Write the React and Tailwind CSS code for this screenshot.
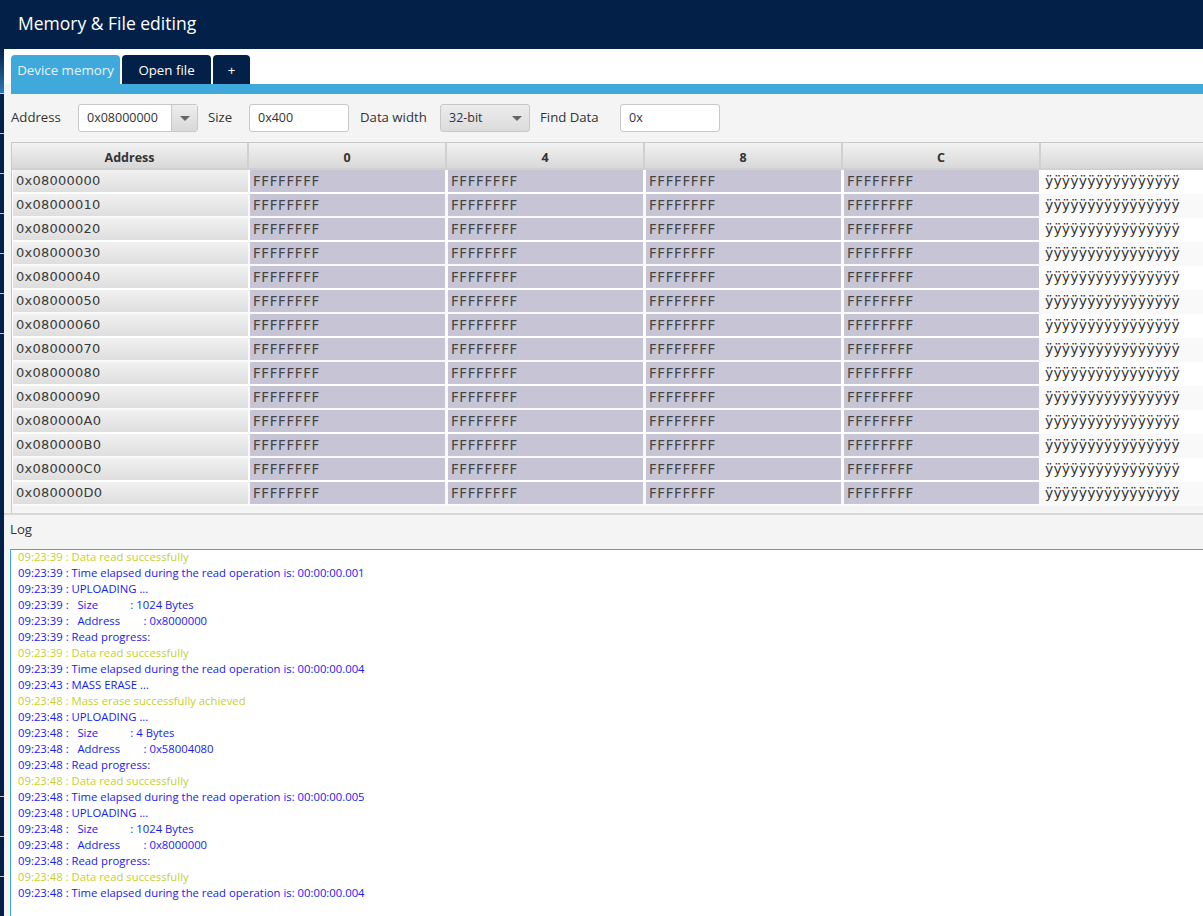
import React from "react";

const hexRows = ["0", "10", "20", "30", "40", "50", "60", "70", "80", "90", "A0", "B0", "C0", "D0"];

const logLines = [
  ["09:23:39 : Data read successfully", "ok"],
  ["09:23:39 : Time elapsed during the read operation is: 00:00:00.001"],
  ["09:23:39 : UPLOADING ..."],
  ["09:23:39 :   Size           : 1024 Bytes"],
  ["09:23:39 :   Address        : 0x8000000"],
  ["09:23:39 : Read progress:"],
  ["09:23:39 : Data read successfully", "ok"],
  ["09:23:39 : Time elapsed during the read operation is: 00:00:00.004"],
  ["09:23:43 : MASS ERASE ..."],
  ["09:23:48 : Mass erase successfully achieved", "ok"],
  ["09:23:48 : UPLOADING ..."],
  ["09:23:48 :   Size           : 4 Bytes"],
  ["09:23:48 :   Address        : 0x58004080"],
  ["09:23:48 : Read progress:"],
  ["09:23:48 : Data read successfully", "ok"],
  ["09:23:48 : Time elapsed during the read operation is: 00:00:00.005"],
  ["09:23:48 : UPLOADING ..."],
  ["09:23:48 :   Size           : 1024 Bytes"],
  ["09:23:48 :   Address        : 0x8000000"],
  ["09:23:48 : Read progress:"],
  ["09:23:48 : Data read successfully", "ok"],
  ["09:23:48 : Time elapsed during the read operation is: 00:00:00.004"],
];

function HeaderCell({ children, className }) {
  return (
    <div className={`flex items-center justify-center h-full pt-[5px] bg-gradient-to-b from-[#f2f2f2] to-[#d8d8d8] font-bold text-[#333] text-[12.5px] ${className}`}>
      {children}
    </div>
  );
}

function DataCell() {
  return (
    <div className="w-[198px] h-[24px] shrink-0 pl-[1px] pr-[2px] pb-[2px]">
      <div className="h-full pl-[3px] bg-[#c6c4d5] text-[#444] text-[13.5px] tracking-[0.6px] leading-[22px] font-['DejaVu_Sans',sans-serif]">
        FFFFFFFF
      </div>
    </div>
  );
}

function Row({ addr, odd }) {
  return (
    <div className={`flex h-[24px] ${odd ? "bg-[#f9f9f9]" : "bg-white"}`}>
      <div className="w-[237px] h-[24px] shrink-0 pb-[2px] pl-[1px] pr-[1px]">
        <div className="h-full pl-[3px] bg-gradient-to-b from-[#f1f1f1] to-[#dedede] text-[#3a3a3a] text-[13px] leading-[22px] tracking-[0.25px] font-['DejaVu_Sans',sans-serif]">
          {addr}
        </div>
      </div>
      <DataCell />
      <DataCell />
      <DataCell />
      <DataCell />
      <div className="flex-1 pl-[4px] text-[#333] text-[14px] leading-[23px] whitespace-nowrap overflow-hidden font-['DejaVu_Sans',sans-serif] tracking-[0.15px]">
        ÿÿÿÿÿÿÿÿÿÿÿÿÿÿÿÿ
      </div>
    </div>
  );
}

function Field({ value, width, className = "" }) {
  return (
    <div className={`flex items-center h-[28px] pl-[8px] bg-white border border-[#c8c8c8] rounded-[3px] text-[#333] text-[12.5px] ${width} ${className}`}>
      {value}
    </div>
  );
}

function Caret() {
  return <div className="w-0 h-0 border-x-[5px] border-x-transparent border-t-[5px] border-t-[#666]" />;
}

function Tick({ className = "mb-[39px]" }) {
  return <div className={`h-[1px] bg-[#c8c8c8] ${className}`} />;
}

export default function App() {
  return (
    <div className="flex flex-col w-[1203px] h-[916px] overflow-hidden bg-[#032148] font-['Open_Sans',sans-serif]">
      <div className="flex items-center h-[49px] shrink-0 pl-[18px] pb-[3px] text-white text-[17.5px]">
        Memory &amp; File editing
      </div>
      <div className="flex flex-1 min-h-0">
        <div className="w-[4px] shrink-0 flex flex-col">
          <div className="h-[44px] bg-gradient-to-b from-[#032148] to-[#2a7ab8]" />
          <Tick />
          <Tick />
          <Tick />
          <Tick />
          <Tick />
          <Tick />
          <Tick className="mb-[462px]" />
          <Tick />
          <Tick />
          <Tick />
        </div>
        <div className="flex-1 min-w-0 flex flex-col bg-[#f4f4f4]">
          <div className="h-[35px] shrink-0 flex items-end gap-[2px] pl-[7px] bg-white">
            <div className="flex items-center justify-center w-[109px] h-[29px] pt-[2px] rounded-t-[4px] bg-[#3fa9db] text-[#e8f4fa] text-[13.3px]">Device memory</div>
            <div className="flex items-center justify-center w-[89px] h-[29px] pt-[2px] rounded-t-[4px] bg-[#032148] text-white text-[13.3px]">Open file</div>
            <div className="flex items-center justify-center w-[37px] h-[29px] pt-[2px] rounded-t-[4px] bg-[#032148] text-white text-[13.3px]">+</div>
          </div>
          <div className="h-[10px] shrink-0 ml-[7px] bg-[#3fa9db]" />
          <div className="h-[48px] shrink-0 flex items-center pl-[7px] text-[#333] text-[13.2px]">
            <span className="w-[67px]">Address</span>
            <div className="flex w-[120px] h-[28px] bg-white border border-[#c8c8c8] rounded-[3px] text-[12.5px]">
              <div className="flex-1 flex items-center pl-[8px] text-[#333]">0x08000000</div>
              <div className="flex items-center justify-center w-[26px] border-l border-[#c8c8c8] bg-gradient-to-b from-[#eeeeee] to-[#d8d8d8]">
                <Caret />
              </div>
            </div>
            <span className="ml-[10px] w-[41px]">Size</span>
            <Field value="0x400" width="w-[100px]" />
            <span className="ml-[11px] w-[80px]">Data width</span>
            <div className="flex items-center justify-between w-[90px] h-[28px] pl-[8px] pr-[7px] border border-[#c8c8c8] rounded-[3px] bg-gradient-to-b from-[#ececec] to-[#dcdcdc] text-[12.5px]">
              32-bit
              <Caret />
            </div>
            <span className="ml-[10px] w-[80px]">Find Data</span>
            <Field value="0x" width="w-[100px]" />
          </div>
          <div className="ml-[7px] h-[371px] shrink-0 flex flex-col border-t border-l border-[#c8c8c8] overflow-hidden">
            <div className="flex h-[27px] shrink-0 border-b-2 border-[#d0d0d0]">
              <HeaderCell className="w-[237px] border-r-2 border-[#d0d0d0]">Address</HeaderCell>
              <HeaderCell className="w-[198px] border-r-2 border-[#d0d0d0]">0</HeaderCell>
              <HeaderCell className="w-[198px] border-r-2 border-[#d0d0d0]">4</HeaderCell>
              <HeaderCell className="w-[198px] border-r-2 border-[#d0d0d0]">8</HeaderCell>
              <HeaderCell className="w-[198px] border-r-2 border-[#d0d0d0]">C</HeaderCell>
              <HeaderCell className="flex-1"> </HeaderCell>
            </div>
            {hexRows.map((r, i) => (
              <Row key={r} addr={`0x080000${r.padStart(2, "0")}`} odd={i % 2 === 1} />
            ))}
          </div>
          <div className="h-[34px] shrink-0 border-t-2 border-[#d8d8d8] pl-[6px] pt-[5px] text-[#333] text-[13.2px]">Log</div>
          <div className="flex-1 min-h-0 ml-[6px] mt-[2px] pl-[7px] bg-white border-l border-t border-[#3fa9db] overflow-hidden text-[11.3px] leading-[16px] whitespace-pre">
            <div className="-mt-px">
              {logLines.map(([text, kind], i) => (
                <div key={i} className={kind === "ok" ? "text-[#c8cf2e]" : "text-[#1a1af0]"}>{text}</div>
              ))}
            </div>
          </div>
        </div>
      </div>
    </div>
  );
}
